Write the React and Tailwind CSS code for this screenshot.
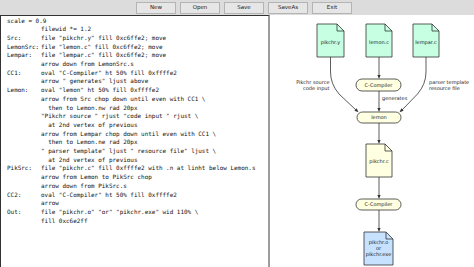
const LINES = [
  ["", "scale = 0.9", true],
  ["", "filewid *= 1.2"],
  ["Src:", 'file "pikchr.y" fill 0xc6ffe2; move'],
  ["LemonSrc:", 'file "lemon.c" fill 0xc6ffe2; move'],
  ["Lempar:", 'file "lempar.c" fill 0xc6ffe2; move'],
  ["", "arrow down from LemonSrc.s"],
  ["CC1:", 'oval "C-Compiler" ht 50% fill 0xffffe2'],
  ["", 'arrow " generates" ljust above'],
  ["Lemon:", 'oval "lemon" ht 50% fill 0xffffe2'],
  ["", "arrow from Src chop down until even with CC1 \\"],
  ["", "  then to Lemon.nw rad 20px"],
  ["", '"Pikchr source " rjust "code input " rjust \\'],
  ["", "  at 2nd vertex of previous"],
  ["", "arrow from Lempar chop down until even with CC1 \\"],
  ["", "  then to Lemon.ne rad 20px"],
  ["", '" parser template" ljust " resource file" ljust \\'],
  ["", "  at 2nd vertex of previous"],
  ["PikSrc:", 'file "pikchr.c" fill 0xffffe2 with .n at linht below Lemon.s'],
  ["", "arrow from Lemon to PikSrc chop"],
  ["", "arrow down from PikSrc.s"],
  ["CC2:", 'oval "C-Compiler" ht 50% fill 0xffffe2'],
  ["", "arrow"],
  ["Out:", 'file "pikchr.o" "or" "pikchr.exe" wid 110% \\'],
  ["", "fill 0xc6e2ff"],
];

const BUTTONS = ["New", "Open", "Save", "SaveAs", "Exit"];

const LABEL = "font-['DejaVu_Sans',sans-serif] text-[5px] fill-[#222]";

function FileShape({ x0, y0, x1, y1, fill }) {
  const f = 7;
  return (
    <g stroke="#333" strokeWidth="0.8" strokeLinejoin="round">
      <path
        d={`M${x0} ${y0} L${x1 - f} ${y0} L${x1} ${y0 + f} L${x1} ${y1} L${x0} ${y1} Z`}
        fill={fill}
      />
      <path d={`M${x1 - f} ${y0} L${x1 - f} ${y0 + f} L${x1} ${y0 + f}`} fill="none" />
    </g>
  );
}

function Oval({ x0, y0, x1, y1 }) {
  const h = y1 - y0;
  return (
    <rect
      x={x0}
      y={y0}
      width={x1 - x0}
      height={h}
      rx={h / 2}
      fill="#ffffe2"
      stroke="#333"
      strokeWidth="0.8"
    />
  );
}

// arrow head, tip at x,y, pointing along angle dir
function Head({ x, y, dir }) {
  return (
    <polygon
      points="0,0 -4,-1.6 -4,1.6"
      fill="#333"
      transform={`translate(${x} ${y}) rotate(${dir})`}
    />
  );
}

function Diagram() {
  return (
    <svg width="204" height="252" viewBox="270 15 204 252" className="block">
      <FileShape x0={317} y0={24} x1={344} y1={57} fill="#c6ffe2" />
      <FileShape x0={366} y0={24} x1={392} y1={57} fill="#c6ffe2" />
      <FileShape x0={413} y0={24} x1={439} y1={57} fill="#c6ffe2" />
      <text x="330.5" y="43.5" textAnchor="middle" className={LABEL}>pikchr.y</text>
      <text x="379" y="43.5" textAnchor="middle" className={LABEL}>lemon.c</text>
      <text x="426" y="43.5" textAnchor="middle" className={LABEL}>lempar.c</text>

      <g stroke="#333" strokeWidth="0.8" fill="none">
        <path d="M330.5 57 L330.5 72 Q330.5 84 339 94 L356 110" />
        <path d="M426 57 L426 72 Q426 84 417.5 94 L402 110" />
        <path d="M379 57 L379 76" />
        <path d="M379 91 L379 109" />
        <path d="M379 123 L379 141" />
        <path d="M379 177 L379 196" />
        <path d="M379 210 L379 229" />
      </g>
      <Head x={358.5} y={112.2} dir={42} />
      <Head x={399.5} y={112.2} dir={138} />
      <Head x={379} y={79} dir={90} />
      <Head x={379} y={112} dir={90} />
      <Head x={379} y={144} dir={90} />
      <Head x={379} y={199} dir={90} />
      <Head x={379} y={232} dir={90} />

      <text x="329.5" y="83.5" textAnchor="end" className={LABEL}>Pikchr source</text>
      <text x="329.5" y="89.5" textAnchor="end" className={LABEL}>code input</text>
      <text x="429" y="83.5" className={LABEL}>parser template</text>
      <text x="429" y="89.5" className={LABEL}>resource file</text>
      <text x="382" y="99.5" className={LABEL}>generates</text>

      <Oval x0={356} y0={79} x1={401} y1={91} />
      <text x="378.5" y="86.8" textAnchor="middle" className={LABEL}>C-Compiler</text>
      <Oval x0={357} y0={112} x1={401} y1={123} />
      <text x="379" y="119.3" textAnchor="middle" className={LABEL}>lemon</text>

      <FileShape x0={366} y0={144} x1={392} y1={177} fill="#ffffe2" />
      <text x="379" y="162.5" textAnchor="middle" className={LABEL}>pikchr.c</text>

      <Oval x0={356} y0={199} x1={401} y1={210} />
      <text x="378.5" y="206.3" textAnchor="middle" className={LABEL}>C-Compiler</text>

      <FileShape x0={364} y0={232} x1={393} y1={265} fill="#c6e2ff" />
      <text x="378.5" y="243.5" textAnchor="middle" className={LABEL}>pikchr.o</text>
      <text x="378.5" y="249.5" textAnchor="middle" className={LABEL}>or</text>
      <text x="378.5" y="256" textAnchor="middle" className={LABEL}>pikchr.exe</text>
    </svg>
  );
}

export default function App() {
  return (
    <div className="w-[474px] h-[267px] bg-[#dcdcdc] flex flex-col overflow-hidden">
      {/* toolbar */}
      <div className="h-[15px] flex items-center gap-[4px] pl-[136px] shrink-0">
        {BUTTONS.map((b) => (
          <button
            key={b}
            className="w-[40px] h-[12px] bg-[#e6e6e6] border border-[#b4b4b4] text-[5.5px] leading-none text-[#222] font-['DejaVu_Sans',sans-serif]"
          >
            {b}
          </button>
        ))}
      </div>

      <div className="flex-1 flex min-h-0">
        {/* source text */}
        <div className="w-[270px] bg-white border-t border-l border-[#333] border-r-2 border-r-[#9c9c9c] pl-[6px] pt-[0.5px]">
          <div className="font-['DejaVu_Sans_Mono',monospace] text-[5.95px] leading-[8.7px] text-[#111]">
            {LINES.map(([lab, code, full], i) =>
              full ? (
                <div key={i} className="whitespace-pre">{code}</div>
              ) : (
                <div key={i} className="grid grid-cols-[34px_1fr] whitespace-pre">
                  <span>{lab}</span>
                  <span>{code}</span>
                </div>
              )
            )}
          </div>
        </div>

        {/* diagram canvas */}
        <div className="flex-1 bg-white">
          <Diagram />
        </div>
      </div>
    </div>
  );
}
